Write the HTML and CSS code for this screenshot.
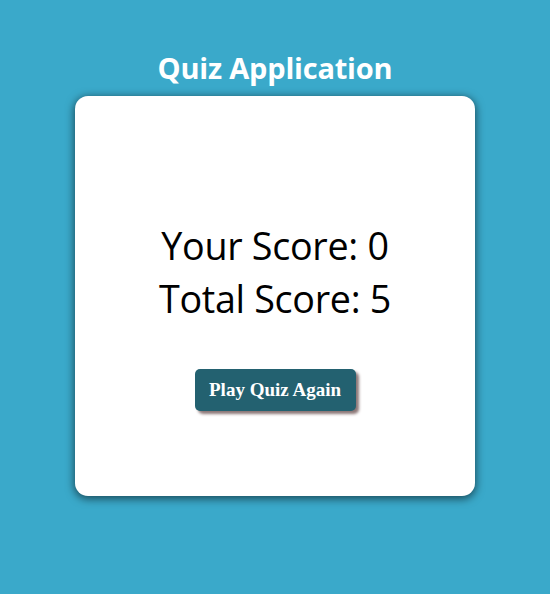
FILE: index.html
```html
<!DOCTYPE html>
<html lang="en">
<head>
<meta charset="utf-8">
<title>Quiz Application</title>
<link rel="stylesheet" href="styles.css">
</head>
<body>
  <main class="app">
    <h1 class="title">Quiz Application</h1>
    <section class="card">
      <div class="score">
        <p class="score-line">Your Score: 0</p>
        <p class="score-line">Total Score: 5</p>
      </div>
      <button class="btn">Play Quiz Again</button>
    </section>
  </main>
</body>
</html>
```

FILE: styles.css
```css
html, body {
  margin: 0;
  padding: 0;
}
body {
  background: #3aa9ca;
  width: 550px;
  height: 594px;
  font-family: "Open Sans", "Noto Sans", sans-serif;
}
.app {
  display: flex;
  flex-direction: column;
  align-items: center;
}
.title {
  margin: 48px 0 0;
  height: 48px;
  line-height: 40px;
  font-size: 29px;
  font-weight: 700;
  color: #ffffff;
  letter-spacing: -0.2px;
}
.card {
  box-sizing: border-box;
  width: 400px;
  height: 400px;
  background: #ffffff;
  border-radius: 13px;
  box-shadow: 0 2px 8px 1px rgba(0, 0, 0, 0.55);
  display: flex;
  flex-direction: column;
  align-items: center;
  padding-top: 123px;
}
.score {
  text-align: center;
}
.score-line {
  margin: 0;
  font-size: 37.7px;
  line-height: 53px;
  color: #000000;
  letter-spacing: -0.3px;
}
.btn {
  margin-top: 44px;
  width: 161px;
  height: 42px;
  border: none;
  border-radius: 5px;
  background: #236170;
  color: #ffffff;
  font-family: "Liberation Serif", serif;
  font-weight: 700;
  font-size: 19px;
  box-shadow: 3px 3px 3px #8c7777;
  padding: 0;
}
```
